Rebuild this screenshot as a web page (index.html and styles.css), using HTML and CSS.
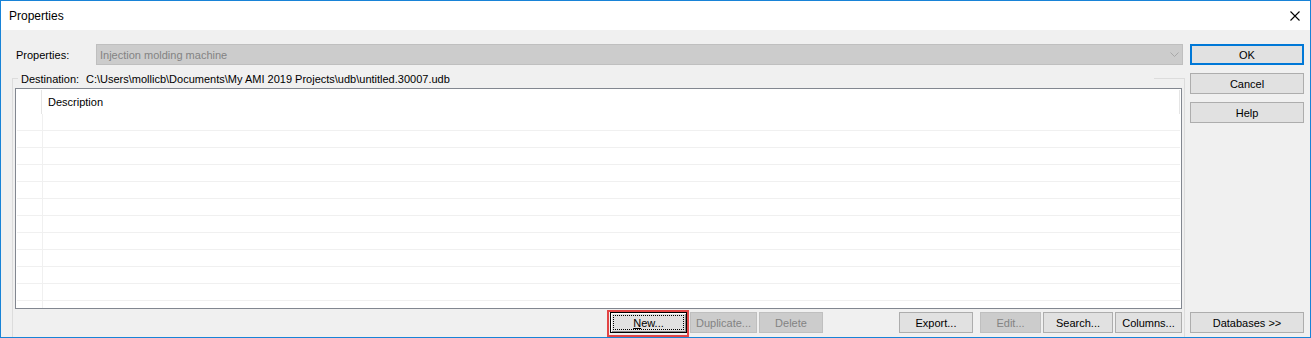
FILE: index.html
```html
<!DOCTYPE html>
<html lang="en">
<head>
  <meta charset="UTF-8" />
  <title>Properties</title>
  <link rel="stylesheet" href="styles.css">
</head>
<body>
  <div class="window">
    <div class="titlebar">
      <span class="title">Properties</span>
      <svg class="close" width="10" height="10" viewBox="0 0 10 10">
        <path d="M0.5 0.5 L9.5 9.5 M9.5 0.5 L0.5 9.5" stroke="#000" stroke-width="1.1" fill="none"/>
      </svg>
    </div>

    <div class="content">
      <div class="main">
        <div class="prop-row">
          <span class="prop-label">Properties:</span>
          <div class="combo">
            <span>Injection molding machine</span>
            <svg class="chevron" width="9" height="5" viewBox="0 0 9 5">
              <path d="M0.5 0.5 L4.5 4.5 L8.5 0.5" stroke="#a8a8a8" stroke-width="1" fill="none"/>
            </svg>
          </div>
        </div>

        <div class="group">
          <div class="group-title">
            <span class="dest-label">Destination:</span>
            <span>C:\Users\mollicb\Documents\My AMI 2019 Projects\udb\untitled.30007.udb</span>
          </div>

          <div class="list">
            <div class="list-head">
              <div class="head-num"></div>
              <div class="head-desc">Description</div>
            </div>
            <div class="list-row"><div class="row-num"></div></div>
            <div class="list-row"><div class="row-num"></div></div>
            <div class="list-row"><div class="row-num"></div></div>
            <div class="list-row"><div class="row-num"></div></div>
            <div class="list-row"><div class="row-num"></div></div>
            <div class="list-row"><div class="row-num"></div></div>
            <div class="list-row"><div class="row-num"></div></div>
            <div class="list-row"><div class="row-num"></div></div>
            <div class="list-row"><div class="row-num"></div></div>
            <div class="list-row"><div class="row-num"></div></div>
            <div class="list-row"><div class="row-num"></div></div>
            <div class="list-row"><div class="row-num"></div></div>
          </div>

          <div class="btn-row">
            <button class="btn btn-default btn-new"><span class="focus"><u>N</u>ew...</span></button>
            <button class="btn btn-disabled btn-dup">Duplicate...</button>
            <button class="btn btn-disabled btn-del">Delete</button>
            <div class="btn-group">
              <button class="btn btn-export">Export...</button>
              <button class="btn btn-disabled btn-edit">Edit...</button>
              <button class="btn btn-search">Search...</button>
              <button class="btn btn-columns">Columns...</button>
            </div>
          </div>
        </div>
      </div>

      <div class="side">
        <button class="btn btn-ok">OK</button>
        <button class="btn">Cancel</button>
        <button class="btn">Help</button>
        <button class="btn btn-db">Databases &gt;&gt;</button>
      </div>
    </div>
  </div>
</body>
</html>
```

FILE: styles.css
```css
/* Page */
body {
  margin: 0;
  font-family: "Liberation Sans", Arial, sans-serif;
  font-size: 11px;
  color: #000;
}

/* Dialog window */
.window {
  width: 1311px;
  height: 338px;
  box-sizing: border-box;
  border: 1px solid #1883d7;
  background-color: #f0f0f0;
  display: flex;
  flex-direction: column;
}

.titlebar {
  height: 29px;
  flex-shrink: 0;
  background-color: #fff;
  display: flex;
  align-items: center;
  justify-content: space-between;
  padding: 0 10px 0 8px;
  font-size: 12px;
}

.close {
  display: block;
}

/* Body of the dialog: main area + button column */
.content {
  flex: 1;
  min-height: 0;
  display: grid;
  grid-template-columns: 1173px 114px;
  column-gap: 5px;
  padding: 14px 6px 0 11px;
}

.main {
  display: flex;
  flex-direction: column;
}

.prop-row {
  display: flex;
  align-items: center;
  height: 21px;
  padding-left: 4px;
}

.prop-label {
  width: 80px;
}

.combo {
  flex: 1;
  height: 21px;
  margin-right: 2px;
  box-sizing: border-box;
  border: 1px solid #bfbfbf;
  background-color: #cccccc;
  color: #838383;
  display: flex;
  align-items: center;
  justify-content: space-between;
  padding: 0 3px;
}

/* Group box */
.group {
  flex: 1;
  margin-top: 13px;
  border: 1px solid #dcdcdc;
  border-bottom: none;
  padding: 0 2px 4px;
  display: flex;
  flex-direction: column;
}

.group-title {
  display: flex;
  height: 14px;
  line-height: 14px;
  margin: -7px 28px 0 3px;
  padding-left: 3px;
  background-color: #f0f0f0;
}

.dest-label {
  width: 65px;
}

/* List view */
.list {
  margin-top: 2px;
  height: 221px;
  box-sizing: border-box;
  border: 1px solid #828790;
  background-color: #fff;
  overflow: hidden;
  padding: 1px 1px 0 1px;
}

.list-head {
  display: flex;
  height: 24px;
}

.head-num {
  width: 24px;
  border-right: 1px solid #e5e5e5;
}

.head-desc {
  flex: 1;
  display: flex;
  align-items: center;
  padding-left: 6px;
  border-right: 1px solid #e5e5e5;
}

.list-row {
  display: flex;
  height: 17px;
  box-sizing: border-box;
  border-bottom: 1px solid #f0f0f0;
}

.row-num {
  width: 25px;
  border-right: 1px solid #f0f0f0;
}

/* Buttons */
.btn {
  height: 21px;
  box-sizing: border-box;
  border: 1px solid #adadad;
  background-color: #e1e1e1;
  font: inherit;
  color: #000;
  padding: 0;
  display: flex;
  align-items: center;
  justify-content: center;
}

.btn-disabled {
  border-color: #bfbfbf;
  background-color: #cccccc;
  color: #838383;
}

.btn-row {
  display: flex;
  margin-top: 3px;
  padding-left: 595px;
}

.btn-group {
  display: flex;
  margin-left: auto;
}

.btn-new { width: 77px; }
.btn-dup { width: 67px; margin-left: 3px; }
.btn-del { width: 64px; margin-left: 2px; }
.btn-export { width: 74px; }
.btn-edit { width: 61px; margin-left: 7px; }
.btn-search { width: 70px; margin-left: 2px; }
.btn-columns { width: 67px; margin-left: 2px; }

/* Default button with focus rect and the red highlight */
.btn-default {
  position: relative;
  border: 1px solid #000;
  box-shadow: inset 1px 1px 0 #fff, inset -1px -1px 0 #8a8a8a;
  padding: 3px;
}

.btn-default .focus {
  flex: 1;
  align-self: stretch;
  display: flex;
  align-items: center;
  justify-content: center;
  outline: 1px dotted #000;
}

.btn-new::after {
  content: "";
  position: absolute;
  left: -4px;
  top: -3px;
  right: -3px;
  bottom: -5px;
  border: 2px solid #e24545;
}

.side {
  display: flex;
  flex-direction: column;
  gap: 8px;
  padding-bottom: 4px;
}

.btn-ok {
  border: 2px solid #0078d7;
}

.btn-db {
  margin-top: auto;
}
```
